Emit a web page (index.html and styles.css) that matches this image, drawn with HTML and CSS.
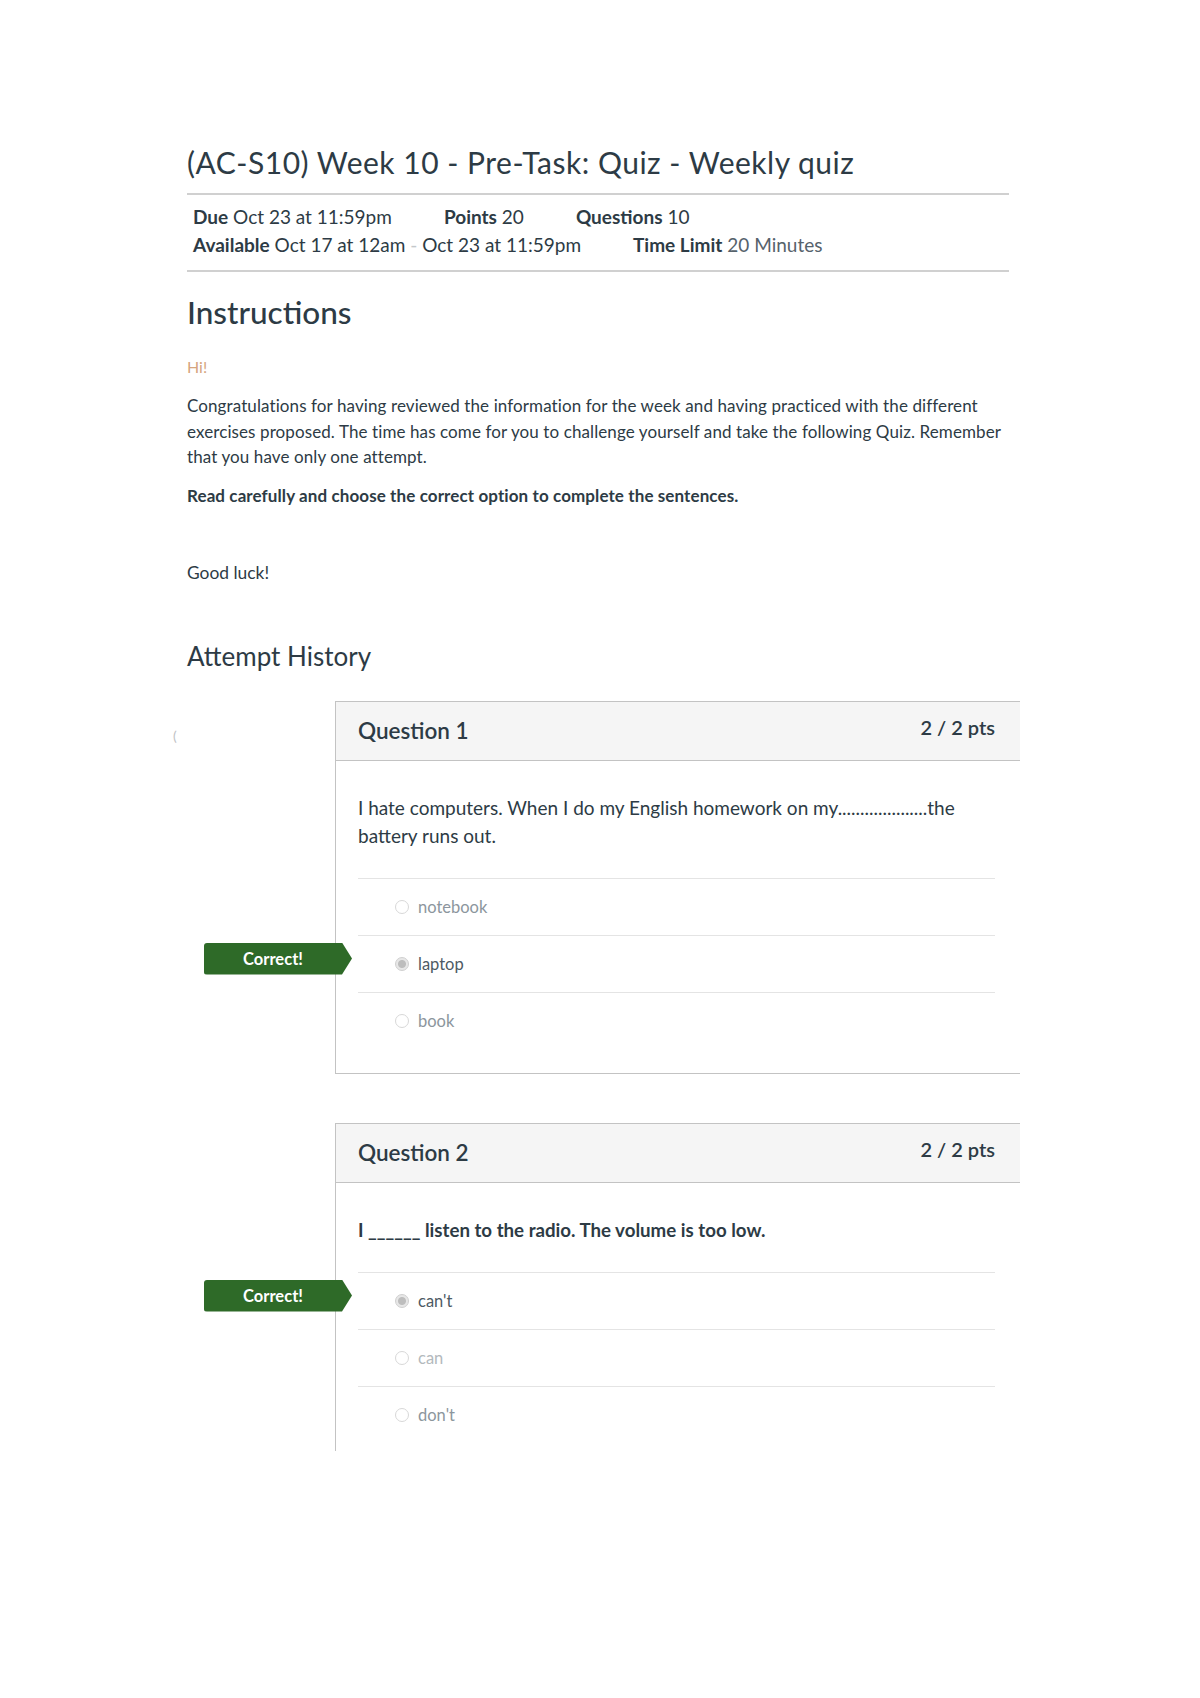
FILE: index.html
```html
<!DOCTYPE html>
<html lang="en">
<head>
<meta charset="utf-8">
<title>(AC-S10) Week 10 - Pre-Task: Quiz - Weekly quiz</title>
<link rel="stylesheet" href="styles.css">
</head>
<body>
<main class="page">
  <h1 class="title">(AC-S10) Week 10 - Pre-Task: Quiz - Weekly quiz</h1>
  <section class="meta">
    <div class="meta-row">
      <span class="meta-item"><b>Due</b> Oct 23 at 11:59pm</span>
      <span class="meta-item"><b>Points</b> 20</span>
      <span class="meta-item"><b>Questions</b> 10</span>
    </div>
    <div class="meta-row">
      <span class="meta-item"><b>Available</b> Oct 17 at 12am <span class="dash">-</span> Oct 23 at 11:59pm</span>
      <span class="meta-item"><b>Time Limit</b> <span class="soft">20 Minutes</span></span>
    </div>
  </section>

  <h2 class="instructions">Instructions</h2>
  <p class="hi">Hi!</p>
  <p class="intro">Congratulations for having reviewed the information for the week and having practiced with the different exercises proposed. The time has come for you to challenge yourself and take the following Quiz. Remember that you have only one attempt.</p>
  <p class="read">Read carefully and choose the correct option to complete the sentences.</p>
  <p class="luck">Good luck!</p>

  <h3 class="history">Attempt History</h3>

  <div class="question">
    <span class="stray">(</span>
    <div class="q-header">
      <span class="q-name">Question 1</span>
      <span class="q-pts">2 / 2 pts</span>
    </div>
    <div class="q-body">
      <p class="q-text">I hate computers. When I do my English homework on my....................the battery runs out.</p>
      <ul class="answers">
        <li class="answer"><span class="radio"></span><span class="ans-text">notebook</span></li>
        <li class="answer selected"><span class="badge">Correct!</span><span class="radio"></span><span class="ans-text">laptop</span></li>
        <li class="answer"><span class="radio"></span><span class="ans-text">book</span></li>
      </ul>
    </div>
  </div>

  <div class="question open">
    <div class="q-header">
      <span class="q-name">Question 2</span>
      <span class="q-pts">2 / 2 pts</span>
    </div>
    <div class="q-body">
      <p class="q-text strong">I ______ listen to the radio. The volume is too low.</p>
      <ul class="answers">
        <li class="answer selected"><span class="badge">Correct!</span><span class="radio"></span><span class="ans-text">can't</span></li>
        <li class="answer faint"><span class="radio"></span><span class="ans-text">can</span></li>
        <li class="answer"><span class="radio"></span><span class="ans-text">don't</span></li>
      </ul>
    </div>
  </div>
</main>
</body>
</html>
```

FILE: styles.css
```css
* { box-sizing: border-box; }

body {
  margin: 0;
  background: #ffffff;
  color: #2d3b45;
  font-family: Lato, "Open Sans", "Liberation Sans", sans-serif;
}

.page {
  padding: 145px 0 0 187px;
  width: 1030px;
}

.title {
  margin: 0;
  font-size: 30px;
  line-height: 34px;
  font-weight: 400;
  letter-spacing: 0.5px;
  color: #2d3b45;
  width: 822px;
  padding-bottom: 14px;
  border-bottom: 2px solid #d0d0d0;
}

.meta {
  width: 822px;
  padding: 8px 0 11px 6px;
  border-bottom: 2px solid #d0d0d0;
}

.meta-row {
  display: flex;
  column-gap: 52px;
  font-size: 19px;
  line-height: 28px;
}

.meta-item b { font-weight: 700; }
.dash { color: #c4c8cb; }
.soft { color: #56626b; }

.instructions {
  margin: 22px 0 0;
  font-size: 31.5px;
  line-height: 36px;
  font-weight: 500;
}

.hi {
  margin: 25px 0 0;
  font-size: 16px;
  line-height: 24px;
  color: #d6a57e;
}

.intro {
  margin: 14px 0 0;
  width: 822px;
  font-size: 17px;
  letter-spacing: 0.1px;
  line-height: 25.5px;
}

.read {
  margin: 13px 0 0;
  font-size: 17px;
  letter-spacing: 0.1px;
  line-height: 25px;
  font-weight: 700;
}

.luck {
  margin: 52px 0 0;
  font-size: 17.4px;
  line-height: 25px;
}

.history {
  margin: 56px 0 0;
  font-size: 26px;
  line-height: 30px;
  font-weight: 400;
}

.question {
  position: relative;
  margin: 30px 0 0 148px;
  width: 685px;
  border-left: 1px solid #c3c3c3;
  border-top: 1px solid #c3c3c3;
  border-bottom: 1px solid #c3c3c3;
}

.question + .question { margin-top: 49px; }

.question.open { border-bottom: none; }

.stray {
  position: absolute;
  left: -163px;
  top: 25px;
  font-size: 14px;
  color: #bfc3c6;
}

.q-header {
  display: flex;
  justify-content: space-between;
  align-items: center;
  height: 59px;
  padding: 0 25px 0 22px;
  background: #f5f5f5;
  border-bottom: 1px solid #c3c3c3;
}

.q-name {
  font-size: 22.5px;
  font-weight: 600;
}

.q-pts {
  font-size: 20px;
  font-weight: 600;
  margin-bottom: 8px;
}

.q-body {
  padding: 33px 25px 24px 22px;
}

.question.open .q-body { padding-bottom: 8px; }

.q-text {
  margin: 0;
  font-size: 19px;
  line-height: 28px;
}

.q-text.strong { font-weight: 700; font-size: 18.7px; }

.answers {
  list-style: none;
  margin: 28px 0 0;
  padding: 0;
}

.answer {
  position: relative;
  display: flex;
  align-items: center;
  height: 57px;
  padding-left: 37px;
  border-top: 1px solid #e4e4e4;
  font-size: 16.5px;
  color: #8c969d;
}

.answer.selected { color: #4d5a64; }
.answer.faint { color: #b3b9bd; }

.radio {
  width: 14px;
  height: 14px;
  border-radius: 50%;
  border: 1px solid #d8d8d8;
  background: #ffffff;
  margin-right: 9px;
  flex: none;
}

.answer.selected .radio {
  border-color: #cfcfcf;
  background: radial-gradient(circle, #bdbdbd 0, #bdbdbd 3.5px, #e7e7e7 4.5px);
}

.badge {
  position: absolute;
  left: -154px;
  top: 7px;
  width: 148px;
  height: 32px;
  padding-right: 10px;
  display: flex;
  align-items: center;
  justify-content: center;
  background: #2e6a28;
  color: #ffffff;
  font-size: 16.5px;
  font-weight: 700;
  border-radius: 3px 0 0 3px;
  clip-path: polygon(0 0, 138px 0, 100% 50%, 138px 100%, 0 100%);
}
```
